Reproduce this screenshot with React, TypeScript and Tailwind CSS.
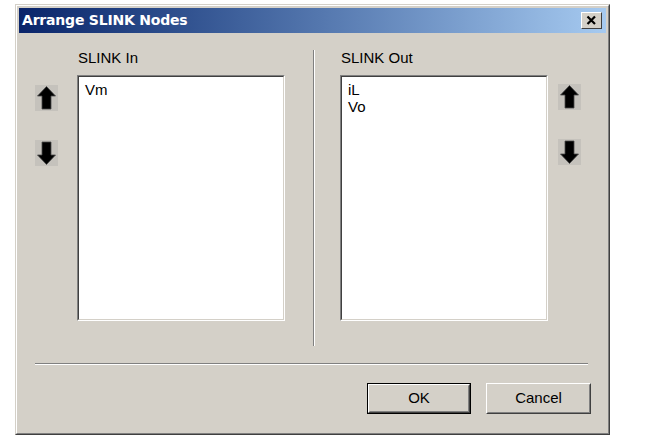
const sans = "font-['Liberation_Sans',Arial,sans-serif]";

function Arrow({ dir }: { dir: "up" | "down" }) {
  const pts =
    dir === "up"
      ? "11.5,1.5 20.5,11 16,11 16,24 7,24 7,11 2.5,11"
      : "11.5,24.5 20.5,15 16,15 16,2 7,2 7,15 2.5,15";
  return (
    <button type="button" className="block h-[26px] w-[23px] bg-[#c5c2bc]">
      <svg width="23" height="26" viewBox="0 0 23 26" className="block">
        <polygon points={pts} fill="#000" stroke="#4a4a4a" strokeWidth="0.8" strokeLinejoin="miter" />
      </svg>
    </button>
  );
}

function ArrowColumn({ className }: { className: string }) {
  return (
    <div className={`flex w-[23px] flex-col gap-[29px] ${className}`}>
      <Arrow dir="up" />
      <Arrow dir="down" />
    </div>
  );
}

function ListGroup({ label, items, className }: { label: string; items: string[]; className: string }) {
  return (
    <div className={`w-[208px] ${className}`}>
      <div className="h-[27px] pl-[1px] pt-[1px] text-[15px] leading-[17px] text-black">{label}</div>
      <div className="h-[246px] border border-t-[#808080] border-l-[#808080] border-b-white border-r-white">
        <div className="h-full border border-t-[#404040] border-l-[#404040] border-b-[#d4d0c8] border-r-[#d4d0c8] bg-white pl-[6px] pt-[4px] text-[15px] leading-[17px] text-black">
          {items.map((item) => (
            <div key={item}>{item}</div>
          ))}
        </div>
      </div>
    </div>
  );
}

function DialogButton({ label, width, isDefault }: { label: string; width: string; isDefault?: boolean }) {
  const face = (
    <div className="h-full border border-t-white border-l-white border-b-[#404040] border-r-[#404040]">
      <div className="flex h-full items-center justify-center border border-t-[#d4d0c8] border-l-[#d4d0c8] border-b-[#808080] border-r-[#808080] text-[15px] text-black">
        {label}
      </div>
    </div>
  );
  return (
    <button type="button" className={`h-[31px] ${width} ${isDefault ? "border border-black" : ""}`}>
      {face}
    </button>
  );
}

export default function App() {
  return (
    <div className={`min-h-[448px] w-[650px] bg-white pl-[15px] pt-[4px] ${sans}`}>
      <div className="h-[431px] w-[595px] border border-t-[#d4d0c8] border-l-[#d4d0c8] border-b-[#404040] border-r-[#404040]">
        <div className="flex h-full flex-col border border-t-white border-l-white border-b-[#808080] border-r-[#808080] bg-[#d4d0c8] p-[2px]">
          {/* title bar */}
          <div className="flex h-[25px] items-center justify-between bg-gradient-to-r from-[#0a246a] to-[#a6caf0] pl-[3px] pr-[4px]">
            <span className="font-['DejaVu_Sans',Verdana,sans-serif] text-[14px] font-bold tracking-[-0.2px] text-white">
              Arrange SLINK Nodes
            </span>
            <button
              type="button"
              className="h-[17px] w-[21px] border border-t-white border-l-white border-b-[#404040] border-r-[#404040] bg-[#d4d0c8]"
            >
              <svg width="19" height="15" viewBox="0 0 19 15" className="block">
                <path d="M5.5 3.5 L13 11 M13 3.5 L5.5 11" stroke="#000" strokeWidth="2.2" />
              </svg>
            </button>
          </div>

          {/* lists */}
          <div className="mt-[15px] flex h-[298px]">
            <ArrowColumn className="ml-[16px] mt-[37px]" />
            <ListGroup label="SLINK In" items={["Vm"]} className="ml-[19px]" />
            <div className="ml-[28px] mt-[2px] h-[296px] w-[2px] border-l border-l-[#808080] border-r border-r-white" />
            <ListGroup label="SLINK Out" items={["iL", "Vo"]} className="ml-[25px]" />
            <ArrowColumn className="ml-[10px] mt-[36px]" />
          </div>

          {/* separator */}
          <div className="ml-[16px] mt-[17px] h-[2px] w-[553px] border-t border-t-[#808080] border-b border-b-white" />

          {/* buttons */}
          <div className="mt-[18px] flex justify-end gap-[15px] pr-[15px]">
            <DialogButton label="OK" width="w-[104px]" isDefault />
            <DialogButton label="Cancel" width="w-[105px]" />
          </div>
        </div>
      </div>
    </div>
  );
}
